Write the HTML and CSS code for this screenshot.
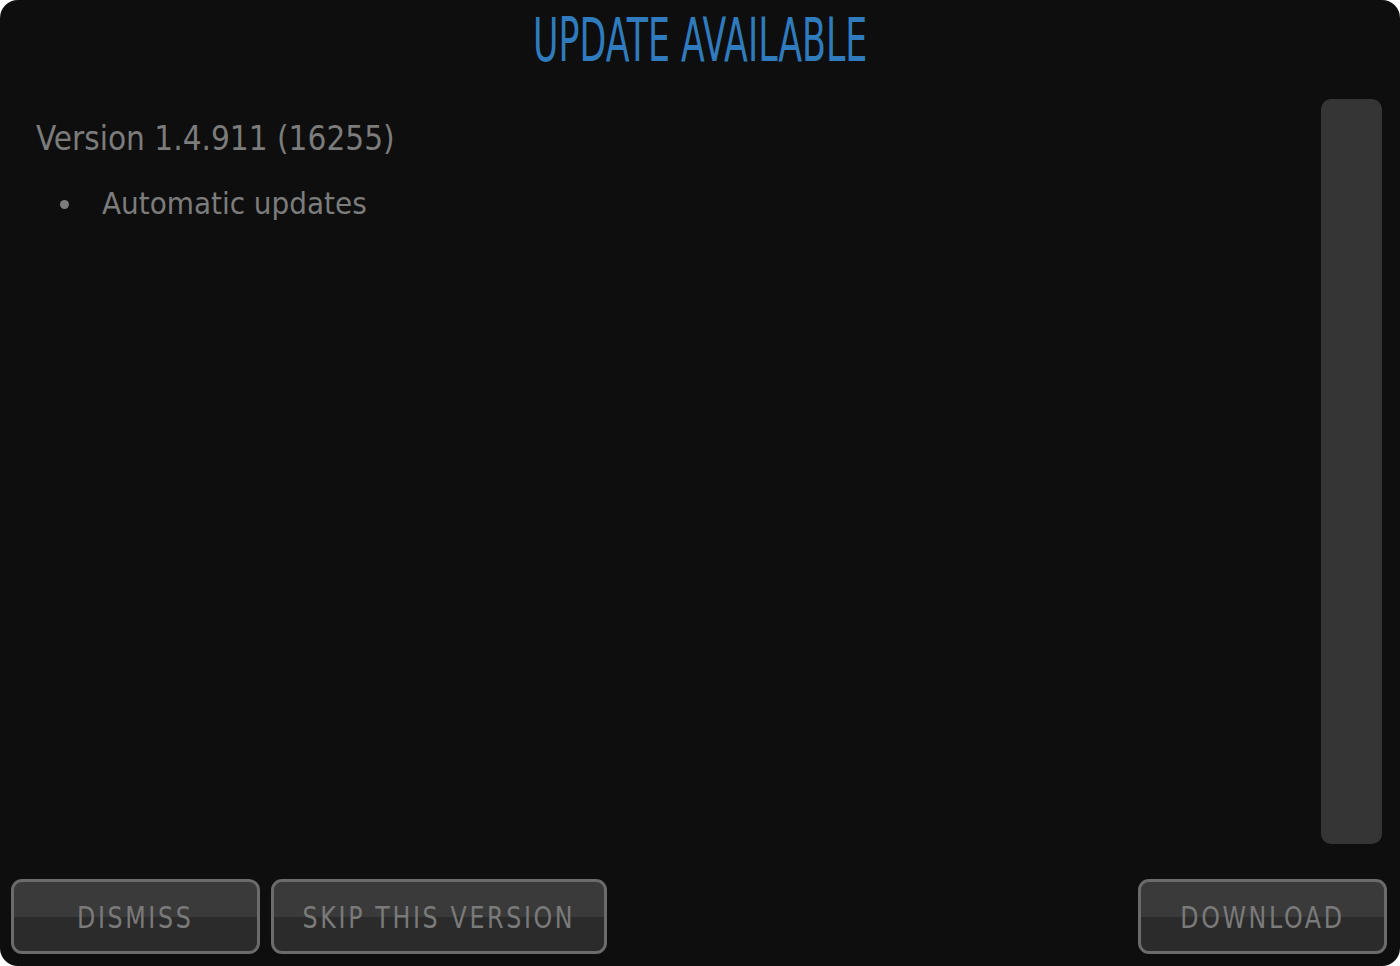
FILE: index.html
```
<!DOCTYPE html>
<html>
<head>
<meta charset="utf-8">
<link rel="stylesheet" href="styles.css">
</head>
<body>
<div class="window">
  <header class="title-bar"><h1 class="title"><span class="title-text">UPDATE AVAILABLE</span></h1></header>
  <main class="body">
    <section class="notes">
      <h2 class="version">Version 1.4.911 (16255)</h2>
      <ul class="changes">
        <li>Automatic updates</li>
      </ul>
    </section>
    <div class="scrollbar"></div>
  </main>
  <footer class="actions">
    <button class="btn btn-dismiss"><span class="btn-label">DISMISS</span></button>
    <button class="btn btn-skip"><span class="btn-label">SKIP THIS VERSION</span></button>
    <span class="spacer"></span>
    <button class="btn btn-download"><span class="btn-label">DOWNLOAD</span></button>
  </footer>
</div>
</body>
</html>
```
FILE: styles.css
```
html, body {
  margin: 0;
  padding: 0;
  background: #ffffff;
}
.window {
  width: 1400px;
  height: 966px;
  background: #0e0e0e;
  border-radius: 18px;
  display: flex;
  flex-direction: column;
  overflow: hidden;
}
.title-bar {
  height: 99px;
  display: flex;
  justify-content: center;
}
.title {
  margin: 0;
  margin-top: 5px;
  font-family: "DejaVu Sans", sans-serif;
  font-weight: normal;
  font-size: 61px;
  line-height: 70px;
  color: #2f7bbd;
}
.title-text {
  display: inline-block;
  transform: scaleX(0.57);
  white-space: nowrap;
}
.body {
  flex: 1;
  display: flex;
  padding-right: 18px;
  padding-bottom: 35px;
}
.notes {
  flex: 1;
  padding-left: 36px;
  color: #7c7c7c;
  font-family: "DejaVu Sans Condensed", "DejaVu Sans", sans-serif;
}
.version {
  margin: 18px 0 0 0;
  font-weight: normal;
  font-size: 33px;
  line-height: 44px;
}
.changes {
  margin: 22px 0 0 0;
  padding-left: 24px;
  list-style: none;
  font-size: 31px;
  line-height: 40px;
}
.changes li {
  display: flex;
  align-items: center;
}
.changes li::before {
  content: "";
  flex: none;
  width: 9px;
  height: 9px;
  border-radius: 50%;
  background: #7c7c7c;
  margin-right: 33px;
  margin-top: 3px;
}
.scrollbar {
  width: 61px;
  background: #353535;
  border-radius: 10px;
}
.actions {
  display: flex;
  gap: 11px;
  padding: 0 13px 12px 11px;
}
.spacer {
  flex: 1;
}
.btn {
  height: 75px;
  border: 3px solid #6b6b6b;
  border-radius: 11px;
  background: linear-gradient(to bottom, #3a3a3a 0, #3a3a3a 50%, #2b2b2b 50%, #2b2b2b 100%);
  color: #7a7a7a;
  font-family: "DejaVu Sans Condensed", "DejaVu Sans", sans-serif;
  font-size: 30px;
  letter-spacing: 3px;
  padding: 0;
  padding-top: 1px;
  display: flex;
  align-items: center;
  justify-content: center;
}
.btn-label {
  display: inline-block;
  transform: scaleX(0.88);
  white-space: nowrap;
}
.btn-dismiss {
  width: 249px;
}
.btn-skip {
  width: 336px;
}
.btn-download {
  width: 249px;
}
```
